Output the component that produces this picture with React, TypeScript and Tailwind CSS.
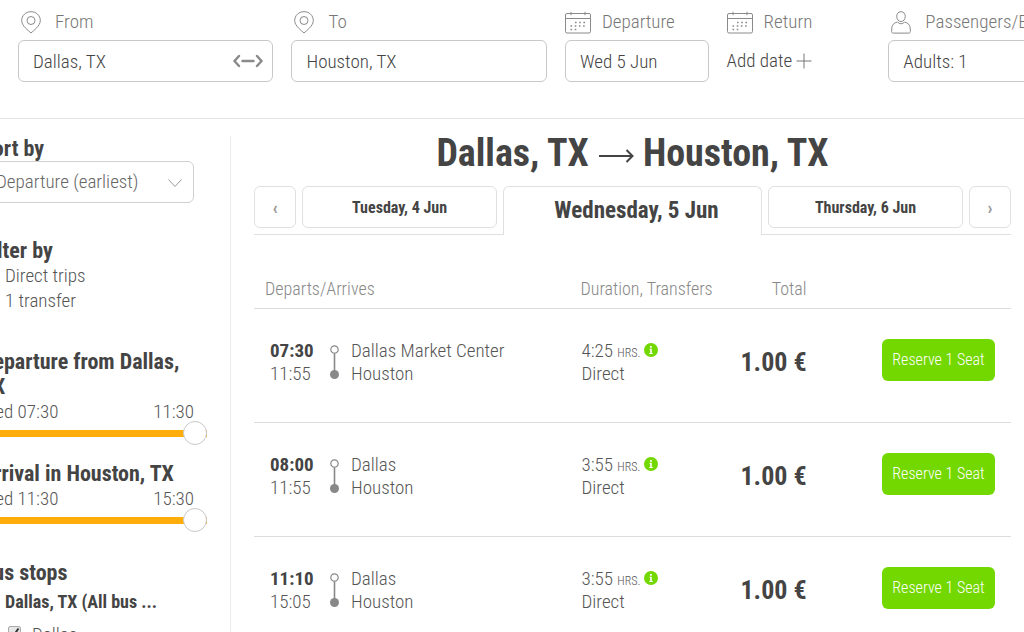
import { useState } from 'react';
import type { ReactNode } from 'react';

interface Trip {
  departs: string;
  arrives: string;
  from: string;
  to: string;
  duration: string;
  transfers: string;
  price: string;
}

const TRIPS: Trip[] = [
  { departs: '07:30', arrives: '11:55', from: 'Dallas Market Center', to: 'Houston', duration: '4:25', transfers: 'Direct', price: '1.00 €' },
  { departs: '08:00', arrives: '11:55', from: 'Dallas', to: 'Houston', duration: '3:55', transfers: 'Direct', price: '1.00 €' },
  { departs: '11:10', arrives: '15:05', from: 'Dallas', to: 'Houston', duration: '3:55', transfers: 'Direct', price: '1.00 €' },
];

const FIELD_CLASS = 'w-full h-[42px] rounded-md border border-[#c8c8c8] bg-white px-[14px] text-[19px] font-light text-[#444] outline-none';

function PinIcon() {
  return (
    <svg className="shrink-0" width="20" height="23" viewBox="0 0 20 23" fill="none" stroke="#8a8a8a" strokeWidth="1">
      <path d="M10 22C7.5 19.5 0.7 15 0.7 9.6C0.7 4.4 4.8 0.7 10 0.7s9.3 3.7 9.3 8.9C19.3 15 12.5 19.5 10 22z" />
      <circle cx="10" cy="9.5" r="4" />
    </svg>
  );
}

function CalendarIcon() {
  return (
    <svg className="-mx-[3px] shrink-0" width="26" height="23" viewBox="0 0 26 23" fill="none" stroke="#8a8a8a" strokeWidth="1">
      <rect x="0.5" y="2.5" width="25" height="19.5" rx="1.5" />
      <path d="M0.5 7.5h25M6 0.8v3.4M20 0.8v3.4" />
      <path d="M10 11.5h12M5.5 15h16M5.5 18.5h8" strokeWidth="1.6" strokeDasharray="1.6 2.6" />
    </svg>
  );
}

function PersonIcon() {
  return (
    <svg className="shrink-0" width="20" height="23" viewBox="0 0 20 23" fill="none" stroke="#8a8a8a" strokeWidth="1">
      <path d="M10 0.7c2.6 0 4.3 2 4.3 4.7S12.4 10.6 10 10.6S5.7 8.1 5.7 5.4S7.4 0.7 10 0.7z" />
      <path d="M6.5 11C3 11.6 0.7 14.2 0.7 18v2.5c0 1 0.6 1.6 1.6 1.6h15.4c1 0 1.6-0.6 1.6-1.6V18c0-3.8-2.3-6.4-5.8-7c-1.8 2.3-5.2 2.3-7 0z" />
    </svg>
  );
}

function Field({ id, label, icon, children }: { id: string; label: string; icon: ReactNode; children: ReactNode }) {
  return (
    <div className="min-w-0">
      <div className="flex h-9 items-center gap-[14px] pl-[3px]">
        {icon}
        <label htmlFor={id} className="whitespace-nowrap text-[19px] font-light leading-6 text-[#777]">{label}</label>
      </div>
      {children}
    </div>
  );
}

function SearchBar() {
  return (
    <header className="-mr-2 grid grid-cols-[16fr_16fr_9fr_9fr_9fr] gap-[18px] border-b border-[#e4e4e4] pt-1 pb-9 pl-[18px]">
      <Field id="from" label="From" icon={<PinIcon />}>
        <div className="relative">
          <input id="from" defaultValue="Dallas, TX" className={FIELD_CLASS} />
          <button type="button" aria-label="Swap cities" className="absolute top-[14px] right-[9px]">
            <svg width="32" height="14" viewBox="0 0 32 14" fill="none" stroke="#8a8a8a" strokeWidth="2.4" strokeLinecap="round">
              <path d="M7 2L2.5 7L7 12M10.500 7h11M25 2l4.500 5L25 12" />
            </svg>
          </button>
        </div>
      </Field>
      <Field id="to" label="To" icon={<PinIcon />}>
        <input id="to" defaultValue="Houston, TX" className={FIELD_CLASS} />
      </Field>
      <Field id="departure" label="Departure" icon={<CalendarIcon />}>
        <input id="departure" defaultValue="Wed 5 Jun" className={FIELD_CLASS} />
      </Field>
      <Field id="return" label="Return" icon={<CalendarIcon />}>
        <button id="return" type="button" className="flex h-[42px] items-center gap-1 text-[19px] font-light text-[#444]">
          Add date
          <svg width="16" height="16" viewBox="0 0 16 16" stroke="#777" strokeWidth="1">
            <path d="M8 0.5v15M0.5 8h15" />
          </svg>
        </button>
      </Field>
      <Field id="passengers" label="Passengers/Bikes" icon={<PersonIcon />}>
        <input id="passengers" defaultValue="Adults: 1" className={FIELD_CLASS} />
      </Field>
    </header>
  );
}

function TimeRange({ title, from, to }: { title: string; from: string; to: string }) {
  const [value, setValue] = useState(100);
  return (
    <section>
      <h3 className="text-[22px] font-bold leading-[25px]">{title}</h3>
      <div className="flex justify-between font-light leading-[25px] text-[#555]">
        <span>{from}</span>
        <span>{to}</span>
      </div>
      <div className="-mt-[3px] -mr-[13px] flex">
        <input
          type="range"
          aria-label={title}
          value={value}
          onChange={(e) => setValue(Number(e.target.value))}
          className="h-6 w-full appearance-none bg-transparent [&::-webkit-slider-runnable-track]:h-[7px] [&::-webkit-slider-runnable-track]:bg-[#ffad0a] [&::-webkit-slider-thumb]:-mt-[9px] [&::-webkit-slider-thumb]:size-6 [&::-webkit-slider-thumb]:appearance-none [&::-webkit-slider-thumb]:rounded-full [&::-webkit-slider-thumb]:border [&::-webkit-slider-thumb]:border-[#c8c8c8] [&::-webkit-slider-thumb]:bg-white"
        />
      </div>
    </section>
  );
}

function Sidebar() {
  return (
    <aside className="-ml-[19px] w-[250px] shrink-0 border-r border-[#ececec] pr-9 text-[19px]">
      <label htmlFor="sort" className="block text-[22px] font-bold leading-[25px]">Sort by</label>
      <div className="relative">
        <select id="sort" className="h-[42px] w-full appearance-none rounded-md border border-[#d0d0d0] bg-white pl-[14px] font-light text-[#666] outline-none">
          <option>Departure (earliest)</option>
          <option>Price (lowest)</option>
        </select>
        <svg className="pointer-events-none absolute top-[18px] right-3" width="14" height="9" viewBox="0 0 14 9" fill="none" stroke="#999" strokeWidth="1">
          <path d="M0.5 0.5L7 7.5L13.5 0.5" />
        </svg>
      </div>

      <h3 className="mt-[35px] text-[22px] font-bold leading-[25px]">Filter by</h3>
      {['Direct trips', '1 transfer'].map((label) => (
        <label key={label} className="flex items-center gap-[11px] font-light leading-[25px] text-[#555]">
          <input type="checkbox" className="size-[13px]" />
          {label}
        </label>
      ))}

      <div className="mt-9 space-y-4">
        <TimeRange title="Departure from Dallas, TX" from="Wed 07:30" to="11:30" />
        <TimeRange title="Arrival in Houston, TX" from="Wed 11:30" to="15:30" />
      </div>

      <h3 className="mt-7 text-[22px] font-bold leading-[25px]">Bus stops</h3>
      <label className="mt-1 flex items-center gap-[11px] text-lg font-bold leading-[25px]">
        <input type="checkbox" className="size-[13px] shrink-0" />
        Dallas, TX (All bus ...
      </label>
      <label className="mt-2 ml-[27px] flex items-center gap-[11px] font-light leading-[25px] text-[#555]">
        <input
          type="checkbox"
          defaultChecked
          className="peer sr-only"
        />
        <svg className="-mt-1 shrink-0" width="13" height="13" viewBox="0 0 13 13" fill="none">
          <rect x="0.5" y="0.5" width="12" height="12" rx="1.5" fill="#e6e6e6" stroke="#aaa" />
          <path d="M3 6.5L5.500 9.500L10.500 2.500" stroke="#333" strokeWidth="2" />
        </svg>
        Dallas
      </label>
    </aside>
  );
}

function DayTabs() {
  const tab = 'h-[42px] rounded-md border border-[#e0e0e0] font-bold';
  return (
    <nav className="mt-4 grid grid-cols-[1fr_259px_1fr]">
      <div className="flex gap-1.5 border-b border-[#e0e0e0] pr-1.5 pb-1.5">
        <button type="button" aria-label="Previous day" className={`${tab} w-[42px] pt-0.5 text-lg text-[#999]`}>‹</button>
        <button type="button" className={`${tab} flex-1 pt-0.5 text-base`}>Tuesday, 4 Jun</button>
      </div>
      <button type="button" className="rounded-t-md border border-b-0 border-[#e0e0e0] pl-2 text-[23px] font-bold">
        Wednesday, 5 Jun
      </button>
      <div className="flex gap-1.5 border-b border-[#e0e0e0] pb-1.5 pl-1.5">
        <button type="button" className={`${tab} flex-1 pt-0.5 text-base`}>Thursday, 6 Jun</button>
        <button type="button" aria-label="Next day" className={`${tab} w-[42px] pt-0.5 text-lg text-[#999]`}>›</button>
      </div>
    </nav>
  );
}

function TripRow({ trip }: { trip: Trip }) {
  return (
    <tr className="h-[114px] border-b border-[#dcdcdc] align-top text-[19px] leading-[23px] text-[#555]">
      <td className="pt-[30px] pl-4">
        <div className="flex">
          <div className="w-[60px]">
            <div className="font-bold text-[#444]">{trip.departs}</div>
            <div>{trip.arrives}</div>
          </div>
          <svg className="mt-1.5 mr-3" width="9" height="35" viewBox="0 0 9 35" fill="none" stroke="#888">
            <circle cx="4.5" cy="4.5" r="3.7" strokeWidth="1.2" />
            <path d="M4.5 8.5v18" strokeWidth="1.6" />
            <circle cx="4.5" cy="29.5" r="4.5" fill="#888" stroke="none" />
          </svg>
          <div>
            <div>{trip.from}</div>
            <div>{trip.to}</div>
          </div>
        </div>
      </td>
      <td className="pt-[30px] pl-0.5">
        <div className="flex items-center gap-1">
          <span>{trip.duration} <span className="text-xs">HRS.</span></span>
          <svg width="14" height="14" viewBox="0 0 14 14">
            <circle cx="7" cy="7" r="7" fill="#73d700" />
            <path d="M5.500 5.800h2.300v4.200h1v1H5.300v-1h0.900V6.800H5.500zM6 3h1.800v1.700H6z" fill="#fff" />
          </svg>
        </div>
        <div>{trip.transfers}</div>
      </td>
      <td className="pt-[30px] text-right text-[26px] font-bold leading-[46px] text-[#444]">{trip.price}</td>
      <td className="pt-[30px] pr-4 text-right">
        <button type="button" className="h-[42px] w-[113px] rounded-md bg-[#73d700] text-base font-light text-white">
          Reserve 1 Seat
        </button>
      </td>
    </tr>
  );
}

export default function App() {
  return (
    <div className="overflow-x-clip bg-white font-['Roboto_Condensed','Roboto',sans-serif] text-[#444]">
      <SearchBar />
      <div className="flex pt-[17px]">
        <Sidebar />
        <main className="min-w-0 flex-1 pr-[13px] pl-[23px]">
          <h1 className="flex h-[34px] items-center justify-center gap-2 whitespace-nowrap text-[38px] font-bold leading-[34px]">
            Dallas, TX
            <svg className="mt-1.5" width="38" height="16" viewBox="0 0 38 16" fill="none" stroke="#444" strokeWidth="2" role="img" aria-label="to">
              <path d="M2 8h33M29.500 2L35.500 8L29.500 14" />
            </svg>
            Houston, TX
          </h1>
          <DayTabs />
          <table className="mt-10 w-full table-fixed text-lg font-light">
            <thead>
              <tr className="h-[33px] whitespace-nowrap border-b border-[#dcdcdc] align-top leading-[28px] text-[#888]">
                <th className="w-[43%] pl-[11px] text-left font-light">Departs/Arrives</th>
                <th className="w-[17%] pl-px text-left font-light">Duration, Transfers</th>
                <th className="w-[13%] text-right font-light">Total</th>
                <th aria-label="Reserve" />
              </tr>
            </thead>
            <tbody>
              {TRIPS.map((trip) => (
                <TripRow key={trip.departs} trip={trip} />
              ))}
            </tbody>
          </table>
        </main>
      </div>
    </div>
  );
}
